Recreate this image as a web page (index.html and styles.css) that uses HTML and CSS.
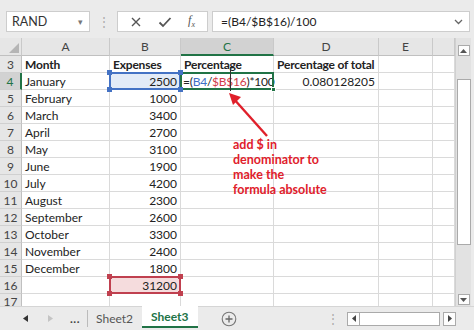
FILE: index.html
```html
<!DOCTYPE html>
<html>
<head>
<meta charset="utf-8">
<link rel="stylesheet" href="styles.css">
</head>
<body>
<div class="app">
  <div class="fbar">
    <div class="namebox"><span>RAND</span><span class="caret">▾</span></div>
    <div class="vdots">⋮</div>
    <div class="fbtns">
      <svg width="12" height="12" viewBox="0 0 12 12"><path d="M2 2L10 10M10 2L2 10" stroke="#555" stroke-width="1.4"/></svg>
      <svg width="14" height="12" viewBox="0 0 14 12"><path d="M1.5 6.5L5 10L12.5 2" stroke="#555" stroke-width="1.8" fill="none"/></svg>
      <span class="fx"><i>f</i><sub>x</sub></span>
    </div>
    <div class="finput"><span>=(B4/$B$16)/100</span>
      <svg width="9" height="6" viewBox="0 0 9 6"><path d="M1 1L4.5 4.5L8 1" stroke="#666" stroke-width="1.3" fill="none"/></svg>
    </div>
  </div>

  <div class="sheetarea">
    <div class="grid">
      <div class="h corner"><svg width="10" height="10" viewBox="0 0 10 10"><path d="M10 0L10 10L0 10Z" fill="#b5b5b5"/></svg></div>
      <div class="h">A</div><div class="h">B</div><div class="h hsel">C</div><div class="h">D</div><div class="h">E</div><div class="h"></div>

      <div class="rn">3</div><div class="c b">Month</div><div class="c b">Expenses</div><div class="c b">Percentage</div><div class="c b">Percentage of total</div><div class="c"></div><div class="c"></div>

      <div class="rn rsel">4</div><div class="c">January</div>
      <div class="c r refblue">2500<i class="hd tl"></i><i class="hd tr"></i><i class="hd bl"></i><i class="hd br"></i></div>
      <div class="c active">=(<span class="blu">B4</span>/<span class="red">$B$16</span>)*100<i class="fill"></i><i class="caretline"></i></div>
      <div class="c r">0.080128205</div><div class="c"></div><div class="c"></div>

      <div class="rn">5</div><div class="c">February</div><div class="c r">1000</div><div class="c"></div><div class="c"></div><div class="c"></div><div class="c"></div>
      <div class="rn">6</div><div class="c">March</div><div class="c r">3400</div><div class="c"></div><div class="c"></div><div class="c"></div><div class="c"></div>
      <div class="rn">7</div><div class="c">April</div><div class="c r">2700</div><div class="c"></div><div class="c"></div><div class="c"></div><div class="c"></div>
      <div class="rn">8</div><div class="c">May</div><div class="c r">3100</div><div class="c"></div><div class="c"></div><div class="c"></div><div class="c"></div>
      <div class="rn">9</div><div class="c">June</div><div class="c r">1900</div><div class="c"></div><div class="c"></div><div class="c"></div><div class="c"></div>
      <div class="rn">10</div><div class="c">July</div><div class="c r">4200</div><div class="c"></div><div class="c"></div><div class="c"></div><div class="c"></div>
      <div class="rn">11</div><div class="c">August</div><div class="c r">2300</div><div class="c"></div><div class="c"></div><div class="c"></div><div class="c"></div>
      <div class="rn">12</div><div class="c">September</div><div class="c r">2600</div><div class="c"></div><div class="c"></div><div class="c"></div><div class="c"></div>
      <div class="rn">13</div><div class="c">October</div><div class="c r">3300</div><div class="c"></div><div class="c"></div><div class="c"></div><div class="c"></div>
      <div class="rn">14</div><div class="c">November</div><div class="c r">2400</div><div class="c"></div><div class="c"></div><div class="c"></div><div class="c"></div>
      <div class="rn">15</div><div class="c">December</div><div class="c r">1800</div><div class="c"></div><div class="c"></div><div class="c"></div><div class="c"></div>
      <div class="rn">16</div><div class="c"></div>
      <div class="c r refred">31200<i class="hd tl"></i><i class="hd tr"></i><i class="hd bl"></i><i class="hd br"></i></div>
      <div class="c"></div><div class="c"></div><div class="c"></div><div class="c"></div>
      <div class="rn rlast">17</div><div class="c"></div><div class="c"></div><div class="c"></div><div class="c"></div><div class="c"></div><div class="c"></div>

      <svg class="arrow" width="60" height="60" viewBox="0 0 60 60">
        <path d="M47 47L13 9" stroke="#e0202b" stroke-width="2.4" fill="none"/>
        <path d="M9 4L21 8L13 16Z" fill="#e0202b"/>
      </svg>
      <div class="note">add $ in<br>denominator to<br>make the<br>formula absolute</div>
    </div>
    <div class="vscroll">
      <div class="sbtn"><svg width="7" height="4" viewBox="0 0 7 4"><path d="M0 4L3.5 0L7 4Z" fill="#555"/></svg></div>
      <div class="vthumb"></div>
      <div class="sbtn"><svg width="7" height="4" viewBox="0 0 7 4"><path d="M0 0L3.5 4L7 0Z" fill="#555"/></svg></div>
    </div>
  </div>

  <div class="tabs">
    <svg class="tnav" width="5" height="7" viewBox="0 0 5 7"><path d="M5 0L0 3.5L5 7Z" fill="#333"/></svg>
    <svg class="tnav2" width="5" height="7" viewBox="0 0 5 7"><path d="M0 0L5 3.5L0 7Z" fill="#c4c4c4"/></svg>
    <span class="ell">...</span>
    <span class="tsep"></span>
    <span class="tab">Sheet2</span>
    <span class="tab cur">Sheet3</span>
    <svg class="plus" width="16" height="16" viewBox="0 0 16 16"><circle cx="8" cy="8" r="6.8" fill="none" stroke="#777" stroke-width="1.1"/><path d="M8 4.5V11.5M4.5 8H11.5" stroke="#666" stroke-width="1.3"/></svg>
    <span class="hdots">⋮</span>
    <div class="hscroll">
      <div class="hbtn"><svg width="4" height="7" viewBox="0 0 4 7"><path d="M4 0L0 3.5L4 7Z" fill="#444"/></svg></div>
      <div class="hthumb"></div>
      <div class="hbtn"><svg width="4" height="7" viewBox="0 0 4 7"><path d="M0 0L4 3.5L0 7Z" fill="#444"/></svg></div>
    </div>
  </div>
</div>
</body>
</html>
```
FILE: styles.css
```css
* { box-sizing: border-box; }
html, body { margin: 0; padding: 0; }
body {
  width: 474px; height: 330px; overflow: hidden;
  background: #ebebeb;
  font-family: Lato, "Open Sans", sans-serif;
  color: #222;
}
.app { width: 474px; height: 330px; display: flex; flex-direction: column; }

.fbar {
  height: 38px; display: flex; align-items: center;
  padding: 5px 4px 0 6px;
}
.namebox {
  width: 84px; height: 21px; background: #fff; border: 1px solid #cdcdcd;
  display: flex; align-items: center; justify-content: space-between;
  padding: 0 6px 0 5px; font-size: 12.5px; color: #333;
}
.namebox .caret { font-size: 9px; color: #777; }
.vdots { width: 27px; text-align: center; color: #aaa; font-size: 12px; }
.fbtns {
  width: 91px; height: 21px; background: #fff; border: 1px solid #cdcdcd;
  display: flex; align-items: center; justify-content: space-around; padding: 0 4px;
}
.fx { font-family: "Liberation Serif", serif; font-size: 12px; color: #555; }
.fx sub { font-size: 8px; font-style: italic; }
.finput {
  margin-left: 4px; flex: 1; height: 21px; background: #fff; border: 1px solid #cdcdcd;
  display: flex; align-items: center; justify-content: space-between;
  padding: 0 6px 0 8px; font-size: 12px; color: #222;
}

.sheetarea { height: 268px; display: flex; overflow: hidden; }
.grid {
  position: relative;
  width: 455px; height: 268px; overflow: hidden; background: #fff;
  display: grid;
  grid-template-columns: 22px 88px 71px 93px 105px 54px 22px;
  grid-template-rows: 18px;
  grid-auto-rows: 17px;
  font-size: 12px;
}
.h {
  background: #e6e6e6; border-right: 1px solid #c9c9c9; border-bottom: 1px solid #c0c0c0;
  display: flex; align-items: center; justify-content: center; color: #444; font-size: 12px;
}
.corner { align-items: flex-end; justify-content: flex-end; padding: 0 2px 2px 0; }
.hsel { background: #d2d2d2; border-bottom: 2px solid #217346; color: #217346; }
.rn {
  background: #e6e6e6; border-right: 1px solid #c0c0c0; border-bottom: 1px solid #d0d0d0;
  display: flex; align-items: center; justify-content: center; color: #444; font-size: 12px;
}
.rlast { align-items: flex-start; padding-top: 1px; line-height: 13px; }
.rsel { background: #d2d2d2; border-right: 2px solid #217346; color: #217346; }
.c {
  position: relative;
  border-right: 1px solid #dadada; border-bottom: 1px solid #dadada;
  padding: 0 3px; display: flex; align-items: center; white-space: nowrap;
}
.b { font-weight: bold; letter-spacing: -0.2px; }
.r { justify-content: flex-end; }
.blu { color: #3f6fc6; }
.red { color: #d23c4a; }

.refblue { background: #e3ebf7; }
.refblue::after, .refred::after, .active::after {
  content: ""; position: absolute; left: -1px; top: -1px; right: -1px; bottom: -1px;
  border: 2px solid #4472c4; pointer-events: none;
}
.refred { background: #f5dcdd; }
.refred::after { border-color: #c0404f; }
.active { z-index: 2; padding-left: 2px; letter-spacing: -0.25px; }
.active::after { border-color: #217346; }
.hd { position: absolute; width: 5px; height: 5px; background: #4472c4; z-index: 3; }
.refred .hd { background: #c0404f; }
.tl { left: -3px; top: -3px; } .tr { right: -3px; top: -3px; }
.bl { left: -3px; bottom: -3px; } .br { right: -3px; bottom: -3px; }
.fill { position: absolute; right: -3px; bottom: -3px; width: 5px; height: 5px; background: #217346; border: 1px solid #fff; z-index: 3; }
.caretline { position: absolute; left: 49px; top: -6px; width: 1px; height: 24px; background: #333; z-index: 3; }

.arrow { position: absolute; left: 220px; top: 51px; z-index: 4; }
.note {
  position: absolute; left: 233px; top: 99px; z-index: 4;
  color: #e0202b; font-weight: bold; font-size: 12.5px; line-height: 15px; letter-spacing: 0;
}

.vscroll {
  width: 16px; background: #e2e2e2; display: flex; flex-direction: column; align-items: center;
  padding: 7px 0 0; border-left: 1px solid #d0d0d0;
}
.sbtn {
  width: 12px; height: 11px; background: #fdfdfd; border: 1px solid #aaa;
  display: flex; align-items: center; justify-content: center;
}
.vthumb { width: 14px; height: 166px; margin: 23px 0 49px; background: #fff; border: 1px solid #aaa; }

.tabs {
  height: 24px; display: flex; align-items: center; position: relative;
  border-top: 1px solid #d5d5d5; font-size: 12px; color: #555;
}
.tnav { margin-left: 23px; }
.tnav2 { margin-left: 20px; }
.ell { margin-left: 17px; font-weight: bold; color: #444; letter-spacing: 0.5px; }
.tsep { width: 1px; height: 17px; background: #bbb; margin-left: 7px; }
.tab { padding: 0 8px; height: 100%; display: flex; align-items: center; }
.cur {
  background: #fff; color: #217346; font-weight: bold; border-bottom: 2px solid #217346;
  margin-left: 1px; padding: 0 9px; height: 22px; align-self: flex-start; margin-top: -1px;
}
.plus { margin-left: 23px; }
.hdots { margin-left: auto; margin-right: 8px; color: #aaa; font-size: 12px; }
.hscroll {
  margin-right: 18px; width: 109px; height: 14px; display: flex; align-items: stretch;
}
.hbtn {
  width: 13px; background: #fdfdfd; border: 1px solid #aaa;
  display: flex; align-items: center; justify-content: center;
}
.hthumb { flex: 1; background: #fff; border: 1px solid #aaa; border-left: none; margin-right: 3px; }
```
